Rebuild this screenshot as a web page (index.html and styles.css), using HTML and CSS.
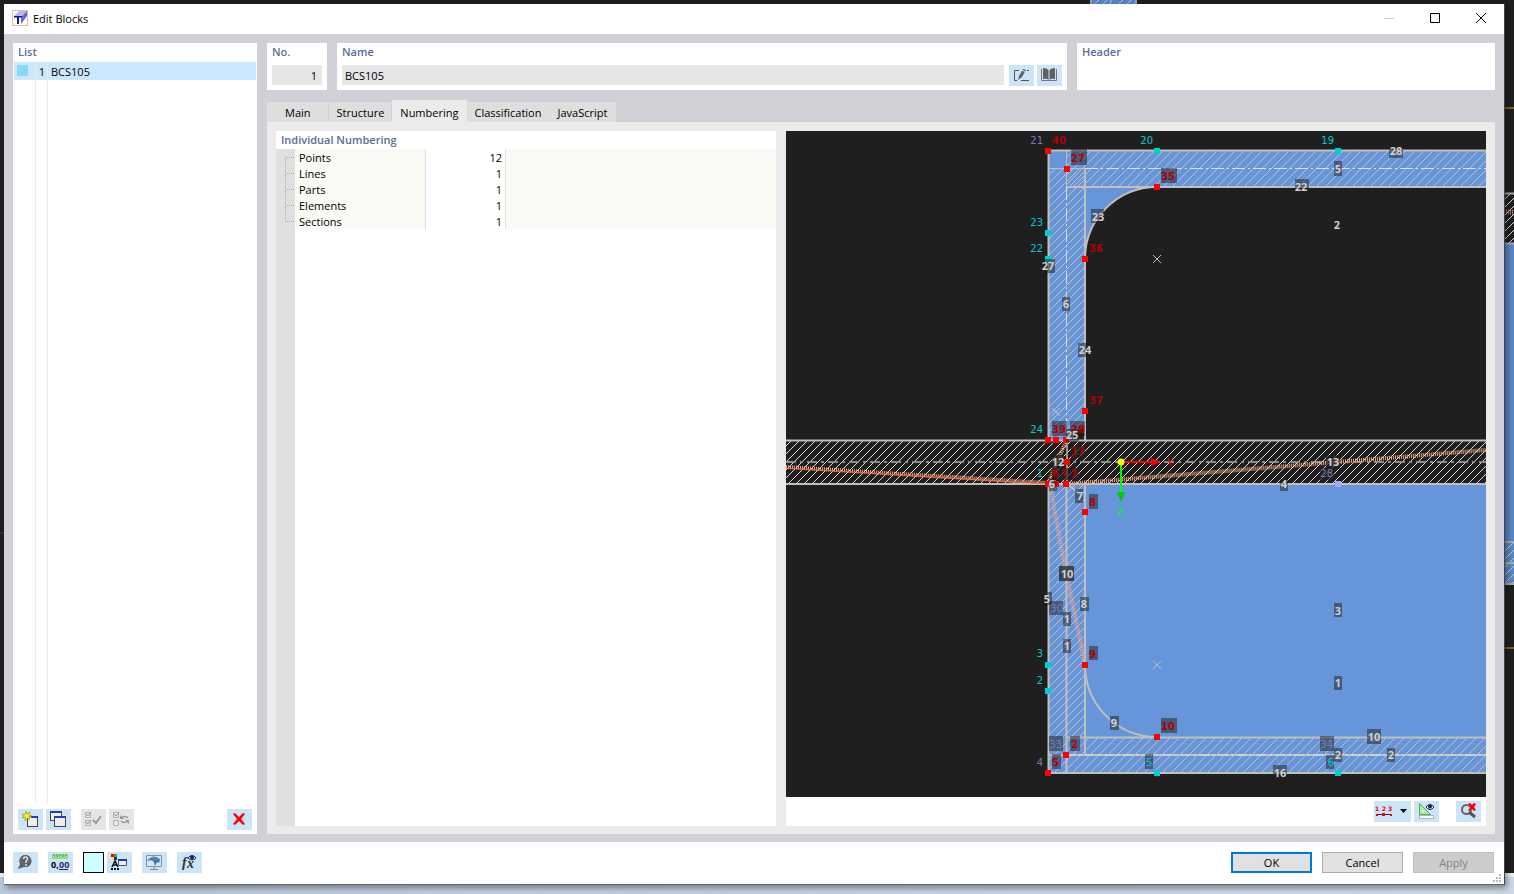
FILE: index.html
```html
<!DOCTYPE html>
<html lang="en">
<head>
<meta charset="utf-8">
<title>Edit Blocks</title>
<link rel="stylesheet" href="styles.css">
</head>
<body>
<svg class="desktop" viewBox="0 0 1514 894" preserveAspectRatio="none" aria-hidden="true">
  <defs>
    <pattern id="hatch" width="8" height="8" patternUnits="userSpaceOnUse"><path d="M-1 1L1 -1M0 8L8 0M7 9L9 7" stroke="#bfbfbf" stroke-width="1" fill="none" shape-rendering="crispEdges"/></pattern>
    <pattern id="hatchWide" width="9" height="9" patternUnits="userSpaceOnUse"><path d="M-1 1L1 -1M0 9L9 0M8 10L10 8" stroke="#bfbfbf" stroke-width="1" fill="none" shape-rendering="crispEdges"/></pattern>
    <pattern id="hatchWhite" width="8" height="8" patternUnits="userSpaceOnUse"><path d="M-1 1L1 -1M0 8L8 0M7 9L9 7" stroke="#dcdcdc" stroke-width="1" fill="none" shape-rendering="crispEdges"/></pattern>
    <linearGradient id="sky"><stop offset="0" stop-color="#b9c8dc"/><stop offset="1" stop-color="#ccd8e5"/></linearGradient>
  </defs>
  <rect width="1514" height="894" fill="#1f1f1f"/>
  <rect x="1090" width="47" height="5" fill="#5583c8"/><path d="M1091 0v5M1136 0v5M1111 0l-1 5M1095 4l4-4M1103 4l4-4M1119 4l4-4M1127 4l4-4" stroke="#bfbfbf"/>
  <path d="M1500 108h14M1500 648h14" stroke="#82660f" stroke-width="2"/>
  <rect x="1500" y="193" width="14" height="51" fill="url(#hatchWhite)"/>
  <rect x="1500" y="244" width="14" height="340" fill="#5b86c5"/>
  <rect x="1500" y="542" width="14" height="42" fill="url(#hatch)"/>
  <path d="M1500 193.500h14M1500 243.500h14M1500 542h14M1500 563h14M1500 584h14" stroke="#aaa" stroke-width="2"/>
  <path d="M1504 212h10" stroke="#b57a61" stroke-width="5" stroke-dasharray="1 1"/>
  <path d="M0 533h4" stroke="#444"/>
  <rect y="873" width="1514" height="4" fill="#eee"/>
  <rect y="877" width="1514" height="17" fill="url(#sky)"/>
</svg>

<main class="window">
  <header class="titlebar">
    <svg class="app-icon" viewBox="0 0 16 16" aria-hidden="true"><rect x=".5" y=".5" width="15" height="15" fill="#fff" stroke="#e8bf93"/><path d="M2 6l5-5h8l-5 5z" fill="#b6b6f6"/><path d="M10 6l5-5v5l-6 8V7z" fill="#6464d8"/><path d="M2 6h8v1.500H7V14H5V7.500H2z" fill="#17178c"/></svg>
    <h1>Edit Blocks</h1>
    <div class="caption">
      <button aria-label="Minimize" disabled><svg viewBox="0 0 10 10"><path d="M0 5.500h10" stroke="#c8c8c8"/></svg></button>
      <button aria-label="Maximize"><svg viewBox="0 0 10 10"><path d="M.5.500h9v9h-9z" stroke="#000" fill="none"/></svg></button>
      <button aria-label="Close"><svg viewBox="0 0 10 10"><path d="M0 0l10 10M10 0L0 10" stroke="#000" fill="none"/></svg></button>
    </div>
  </header>

  <div class="content">
    <section class="panel list">
      <h2>List</h2>
      <ul>
        <li class="selected"><span class="swatch"></span><span class="num">1</span><span class="label">BCS105</span></li>
        <li class="rest"><span></span><span></span><span></span></li>
      </ul>
      <div class="tools">
        <button class="tool" aria-label="New"><svg viewBox="0 0 25 21"><rect x="9.500" y="7.500" width="10" height="10" fill="#eee" stroke="#444"/><path d="M13 7h7v2h-7z" fill="#2638c8"/><path d="M8 2l1 3 3-2-1 3 3 1-3 1 1 3-3-2-2 3V8L4 9l2-2-2-2 3 .500z" fill="#ffef00" stroke="#8b8b20" stroke-width=".6"/></svg></button>
        <button class="tool" aria-label="Copy"><svg viewBox="0 0 25 21"><rect x="4.500" y="2.500" width="11" height="9" fill="#eee" stroke="#444"/><path d="M5 2h10v2H5z" fill="#2638c8"/><rect x="8.500" y="7.500" width="11" height="10" fill="#eee" stroke="#444"/><path d="M9 7h10v2H9z" fill="#2638c8"/></svg></button>
        <button class="tool off gap" aria-label="Select all" disabled><svg viewBox="0 0 25 21"><g fill="none" stroke="#999"><path d="M4.500 3.500h5v5h-5zM4.500 11.500h5v5h-5z" stroke="#b4b4b4"/><path d="M5 5l2 2 3-4M5 13l2 2 3-4"/><path d="M12 11l3 3 5-7" stroke-width="2"/></g></svg></button>
        <button class="tool off" aria-label="Invert selection" disabled><svg viewBox="0 0 25 21"><g fill="none" stroke="#999"><path d="M4.500 3.500h5v5h-5zM4.500 11.500h5v5h-5z" stroke="#b4b4b4"/><path d="M5 5l2 2 3-4"/><path d="M12 9q4-3 7 0M19 12q-4 3-7 0" stroke-width="1.500"/></g><path d="M11 6v4h4zM20 15v-4h-4z" fill="#999"/></svg></button>
        <button class="tool end" aria-label="Delete"><svg viewBox="0 0 25 21"><path d="M6 5l2-1 4 4 4-4 2 1-4 5 4 5-2 1-4-4-4 4-2-1 4-5z" fill="#f00"/></svg></button>
      </div>
    </section>

    <div class="details">
      <div class="fields">
        <section class="panel no"><label for="no">No.</label><input id="no" value="1" readonly></section>
        <section class="panel name"><label for="name">Name</label>
          <div class="name-row"><input id="name" value="BCS105" readonly>
            <button class="tool" aria-label="Edit name"><svg viewBox="0 0 25 21"><path d="M10 5.500H5.500v10H8M12 15.500h8M18 5.500h2" fill="none" stroke="#555"/><path d="M9 15l1-4 4-7 3 1-4 7z" fill="#606060"/><path d="M13 5l3 2" stroke="#cce4f7"/></svg></button>
            <button class="tool" aria-label="Library"><svg viewBox="0 0 25 21"><path d="M4.500 4v11.500h15V4" fill="none" stroke="#777"/><path d="M6 3q4 0 5.500 2v10Q10 13 6 14zM18 3q-4 0-5.500 2v10Q14 13 18 14z" fill="#606060"/></svg></button>
          </div>
        </section>
        <section class="panel header"><h2>Header</h2></section>
      </div>

      <nav class="tabs" role="tablist">
        <button role="tab">Main</button>
        <button role="tab">Structure</button>
        <button role="tab" class="active" aria-selected="true">Numbering</button>
        <button role="tab">Classification</button>
        <button role="tab">JavaScript</button>
      </nav>

      <div class="tabpanel" role="tabpanel">
        <section class="panel numbering">
          <h2>Individual Numbering</h2>
          <table>
            <tr><td class="tree"></td><th scope="row">Points</th><td class="value">12</td><td class="blank"></td></tr>
            <tr><td class="tree"></td><th scope="row">Lines</th><td class="value">1</td><td class="blank"></td></tr>
            <tr><td class="tree"></td><th scope="row">Parts</th><td class="value">1</td><td class="blank"></td></tr>
            <tr><td class="tree"></td><th scope="row">Elements</th><td class="value">1</td><td class="blank"></td></tr>
            <tr><td class="tree"></td><th scope="row">Sections</th><td class="value">1</td><td class="blank"></td></tr>
          </table>
          <div class="gutter"></div>
        </section>

        <section class="panel preview">
          <div class="viewport">
          <svg viewBox="786 131 700 666" preserveAspectRatio="xMidYMid slice" role="img" aria-label="Section preview">
            <!-- upper section -->
            <path d="M1048 150H1486V187H1157A72 72 0 0 0 1085 259V440H1048z" fill="#6695da"/>
            <rect x="1066" y="151" width="420" height="36" fill="url(#hatchWide)"/>
            <rect x="1049" y="169" width="36" height="271" fill="url(#hatch)"/>
            <!-- lower section -->
            <rect x="1048" y="484" width="438" height="289" fill="#6695da"/>
            <rect x="1049" y="484" width="36" height="253" fill="url(#hatch)"/>
            <rect x="1049" y="737" width="437" height="36" fill="url(#hatchWide)"/>
            <!-- plate -->
            <rect x="786" y="440" width="700" height="44" fill="#1f1f1f"/>
            <rect x="786" y="440" width="700" height="44" fill="url(#hatchWhite)"/>
            <path d="M1070 440l15-15v15z" fill="#1f1f1f"/>
            <g fill="none" stroke="#bfbfbf" stroke-width="2">
              <path d="M1048 150.500H1486M1048.500 150V440M1085 168V440M1066 187H1486M1085 259A72 72 0 0 1 1157 187"/>
              <path d="M1049 168.500h36M1066.500 150v37" stroke-width="1"/>
              <path d="M786 440.500H1486M786 484H1486M1048.500 484V773M1066.500 484V773M1085 484V755M1066 737.500H1486M1048 773H1486M1085 665A72 72 0 0 0 1157 737M1049 755H1486M1067 484l13 10"/>
              <path d="M1067 440v44" stroke="#999"/>
            </g>
            <path d="M1085 168.500H1486M1066.500 187V440" stroke="#ddd" stroke-dasharray="13 3 2 3"/>
            <path d="M786 462H1486" stroke="#8b8b8b" stroke-width="2" stroke-dasharray="10 4 3 4"/>
            <path d="M1066 755H1486" stroke="#ddd" stroke-dasharray="10 3 3 3"/>
            <g fill="none" stroke="#f3a580" stroke-width="4" stroke-dasharray="1 1">
              <path d="M786 467L1048 483M1066 484L1486 450M1066 441L1048 484"/>
              <path d="M1050 484L1062 552 1085 665" stroke="#e0a59b"/>
            </g>
            <path d="M786 468L1048 484" stroke="#ff693e"/>
            <g stroke="#bfbfbf" fill="none"><path d="M1153 255l8 8m0-8l-8 8M1153 661l8 8m0-8l-8 8M1052 408l8 8m0-8l-8 8"/></g>

            <g class="points" fill="#f00">
              <path d="M1045 148h6v6h-6zM1064 166h6v6h-6zM1154 184h6v6h-6zM1082 256h6v6h-6zM1082 408h6v6h-6zM1045 437h6v6h-6zM1053 437h6v6h-6zM1063 437h6v6h-6zM1064 459h6v6h-6zM1045 481h6v6h-6zM1053 481h6v6h-6zM1063 481h6v6h-6zM1082 509h6v6h-6zM1082 662h6v6h-6zM1154 734h6v6h-6zM1063 752h6v6h-6zM1045 770h6v6h-6z"/>
              <path d="M1154 148h6v6h-6zM1335 148h6v6h-6zM1045 230h6v6h-6zM1045 256h6v6h-6zM1045 662h6v6h-6zM1045 688h6v6h-6zM1154 770h6v6h-6zM1335 770h6v6h-6z" fill="#00cfcf"/>
              <path d="M1335 481h6v6h-6z" fill="#aaa4ff"/>
            </g>

            <g class="plates">
              <rect x="1071" y="149" width="16" height="16"/><rect x="1161" y="168" width="16" height="15"/>
              <rect x="1091" y="209" width="13" height="14"/><rect x="1042" y="259" width="13" height="14"/><rect x="1062" y="297" width="8" height="14"/>
              <rect x="1078" y="343" width="13" height="14"/><rect x="1389" y="145" width="14" height="13"/><rect x="1334" y="161" width="8" height="15"/><rect x="1295" y="179" width="14" height="14"/>
              <rect x="1052" y="421" width="15" height="15"/><rect x="1070" y="421" width="15" height="15"/><rect x="1066" y="429" width="13" height="13"/>
              <rect x="1052" y="455" width="12" height="14" class="strong"/><rect x="1071" y="446" width="14" height="12" class="strong"/><rect x="1052" y="468" width="26" height="12" class="strong"/><rect x="1049" y="478" width="8" height="13"/>
              <rect x="1075" y="489" width="8" height="14"/><rect x="1089" y="494" width="9" height="15"/><rect x="1280" y="479" width="8" height="12"/><rect x="1326" y="455" width="14" height="14" class="strong"/><rect x="1320" y="468" width="14" height="12" class="strong"/>
              <rect x="1059" y="566" width="15" height="15" class="strong"/><rect x="1044" y="592" width="8" height="13"/><rect x="1049" y="601" width="14" height="14"/><rect x="1080" y="597" width="9" height="14"/><rect x="1063" y="612" width="8" height="14"/><rect x="1063" y="639" width="8" height="14"/>
              <rect x="1089" y="646" width="9" height="14"/><rect x="1110" y="716" width="9" height="14"/><rect x="1161" y="718" width="16" height="15"/>
              <rect x="1049" y="736" width="14" height="15"/><rect x="1070" y="736" width="10" height="15"/><rect x="1052" y="754" width="9" height="15"/><rect x="1145" y="754" width="8" height="15"/>
              <rect x="1334" y="603" width="8" height="14"/><rect x="1334" y="676" width="8" height="14"/><rect x="1320" y="736" width="14" height="15"/><rect x="1326" y="755" width="8" height="14"/><rect x="1334" y="748" width="8" height="14"/><rect x="1367" y="729" width="14" height="15"/><rect x="1387" y="748" width="8" height="14"/><rect x="1273" y="765" width="14" height="12"/>
            </g>

            <g class="t-red">
              <text x="1052" y="144">40</text><text x="1071" y="162">27</text><text x="1161" y="180">35</text><text x="1089" y="252">36</text><text x="1089" y="404">37</text>
              <text x="1052" y="433">39</text><text x="1071" y="433">28</text><text x="1071" y="455">17</text><text x="1052" y="477">6</text><text x="1061" y="477">7</text><text x="1071" y="477">1</text>
              <text x="1089" y="506">8</text><text x="1089" y="658">9</text><text x="1161" y="730">10</text><text x="1071" y="748">2</text><text x="1052" y="766">5</text>
            </g>
            <g class="t-cyan">
              <text x="1153" y="144">20</text><text x="1334" y="144">19</text><text x="1043" y="226">23</text><text x="1043" y="252">22</text><text x="1043" y="433">24</text><text x="1043" y="477">1</text><text x="1043" y="657">3</text><text x="1043" y="684">2</text><text x="1152" y="766">5</text><text x="1334" y="766">6</text>
            </g>
            <g class="t-violet">
              <text x="1043" y="144">21</text><text x="1333" y="477">28</text><text x="1063" y="612">30</text><text x="1062" y="748">33</text><text x="1333" y="748">34</text><text x="1043" y="766">4</text>
            </g>
            <g class="t-grey">
              <text x="1396" y="155">28</text><text x="1338" y="173">5</text><text x="1301" y="191">22</text><text x="1337" y="229">2</text><text x="1098" y="221">23</text><text x="1048" y="270">27</text><text x="1066" y="308">6</text><text x="1085" y="354">24</text>
              <text x="1072" y="439">25</text><text x="1058" y="466">12</text><text x="1052" y="488">6</text><text x="1080" y="500">7</text><text x="1284" y="488">4</text><text x="1333" y="466">13</text>
              <text x="1067" y="578">10</text><text x="1047" y="603">5</text><text x="1084" y="608">8</text><text x="1067" y="623">1</text><text x="1067" y="650">1</text><text x="1114" y="727">9</text>
              <text x="1338" y="615">3</text><text x="1338" y="687">1</text><text x="1338" y="759">2</text><text x="1374" y="741">10</text><text x="1391" y="759">2</text><text x="1280" y="777">16</text>
            </g>
            <g class="axes">
              <path d="M1121 462h35" stroke="#f00" stroke-width="2"/><path d="M1151 458l10 4-10 4z" fill="#f00"/>
              <path d="M1121 462v32" stroke="#0f0" stroke-width="2"/><path d="M1117 492h8l-4 10z" fill="#00c800"/><circle cx="1121" cy="462" r="3.500" fill="#ff0"/>
              <text x="1170" y="466" fill="#f00">Y</text><text x="1121" y="515" fill="#0f0">Z</text>
            </g>
          </svg>
          </div>
          <div class="preview-tools">
            <button class="tool wide" aria-label="Numbering options"><svg viewBox="0 0 37 21"><g class="mini"><text x="3" y="10">1</text><text x="10" y="10">2</text><text x="16" y="10">3</text></g><path d="M3 13.500h14" stroke="#222c77"/><path d="M2 13h2v2H2zM8 12h3v3H8zM16 13h2v2h-2z" fill="#f00"/><path d="M26 8h7l-3.500 4z"/></svg></button>
            <button class="tool" aria-label="Show dimensions"><svg viewBox="0 0 25 21"><path d="M5.500 2.500v11h11z" fill="#a6efa0" stroke="#5aa85a"/><path d="M8 8v3h3z" fill="#e9fce8"/><path d="M5.500 14.500h14v3h-14z" fill="#fff" stroke="#777" stroke-dasharray="1 1"/><path d="M12 6q4-5 8 0-4 5-8 0z" fill="#fff" stroke="#17205a"/><circle cx="16" cy="5.500" r="2" fill="#17205a"/></svg></button>
            <button class="tool last" aria-label="Reset zoom"><svg viewBox="0 0 25 21"><circle cx="10.500" cy="8.500" r="4.500" fill="none" stroke="#666" stroke-width="2"/><path d="M13 11l6 5" stroke="#555" stroke-width="3"/><path d="M12 3l2-1 2 2 2-2 2 1-2 3 2 3-2 1-2-2-3 2-1-1 3-3z" fill="#f00"/></svg></button>
          </div>
        </section>
      </div>
    </div>
  </div>

  <footer>
    <div class="foot-tools">
      <button class="tool" aria-label="Help"><svg viewBox="0 0 25 21"><path d="M5 17l2-5A6 6 0 1 1 11 15z" fill="#636363"/><circle cx="12.500" cy="9" r="6" fill="#636363"/><path d="M10.500 7q0-2 2-2t2 2q0 1-1.500 2v2M13 12v2" stroke="#cce4f7" stroke-width="1.500" fill="none"/></svg></button>
      <button class="tool sp" aria-label="Units"><svg viewBox="0 0 25 21"><path d="M4 2h16v5H4z" fill="#8fdc86"/><path d="M6 2v2M9 2v3M12 2v2M15 2v3M18 2v2" stroke="#55a34f"/><text x="3" y="16" class="unit">0,</text><text x="11" y="16" class="unit blue">00</text><path d="M11 17.500h9" stroke="#1e2c73"/></svg></button>
      <button class="color sp" aria-label="Color"></button>
      <button class="tool" aria-label="Display colors"><svg viewBox="0 0 25 21"><path d="M4 2h3v3H4z" fill="#f00"/><path d="M7 2h3v3H7z" fill="#4a4"/><path d="M4 5h3v3H4z" fill="#ef0"/><path d="M7 5h3v3H7z" fill="#22d"/><path d="M5 15l3-6 3 6M6 13h4" stroke="#111" stroke-width="1.500" fill="none"/><path d="M4 17h8" stroke="#111" stroke-width="2" stroke-dasharray="2 1"/><path d="M11.500 7.500h8v6h-8z" fill="#eee" stroke="#555"/><path d="M11 7h9v2h-9z" fill="#2638a8"/></svg></button>
      <button class="tool sp" aria-label="Display"><svg viewBox="0 0 25 21"><path d="M4.500 3.500h15v11h-15z" fill="#d3e8f6" stroke="#83929c"/><path d="M5 9q6-8 13-2l-1 4-2-1-2 4-1-4-3-2z" fill="#376f99"/><path d="M7 8q5-5 10-1M9 9q3-3 7-1" stroke="#8fb6d2" fill="none" stroke-width=".6"/><path d="M12 15v2M8 17.500h8" stroke="#808c95"/></svg></button>
      <button class="tool sp" aria-label="Function"><svg viewBox="0 0 25 21"><text x="5" y="15" class="fx">f</text><text x="10" y="16" class="fx">x</text><path d="M11 6q4-5 8 0-4 4-8 0z" fill="#fff" stroke="#17205a"/><circle cx="15" cy="5.500" r="2" fill="#17205a"/></svg></button>
    </div>
    <div class="actions">
      <button class="push primary">OK</button>
      <button class="push">Cancel</button>
      <button class="push" disabled>Apply</button>
    </div>
    <svg class="grip" viewBox="0 0 9 9" aria-hidden="true"><path d="M6 0h2v2H6zM3 3h2v2H3zM6 3h2v2H6zM0 6h2v2H0zM3 6h2v2H3zM6 6h2v2H6z" fill="#bbb"/></svg>
  </footer>
</main>
</body>
</html>
```
FILE: styles.css
```css
* { box-sizing: border-box; }

body {
  margin: 0;
  height: 100vh;
  display: flex;
  overflow: hidden;
  background: #1f1f1f;
  color: #000;
  font: 11px/16px "Open Sans", "Noto Sans", sans-serif;
}

button, input { font: inherit; color: inherit; border: 0; padding: 0; margin: 0; border-radius: 0; }
h1, h2 { margin: 0; font-size: 11px; line-height: 16px; }
svg { display: block; }

.desktop { position: absolute; inset: 0; width: 100%; height: 100%; z-index: -1; }

.window {
  flex: 1;
  min-width: 0;
  margin: 4px 9px 9px 4px;
  display: flex;
  flex-direction: column;
  background: #d1d0d6;
  border-right: 1px solid #3c4650;
  border-bottom: 1px solid #666;
  box-shadow: 2px 3px 6px rgba(0, 0, 0, .4);
}

.titlebar { height: 30px; flex: none; display: flex; align-items: center; background: #fff; padding: 0 0 2px 8px; }
.titlebar h1 { flex: 1; font-weight: 400; padding: 1px 0 0 5px; }
.app-icon { width: 16px; height: 16px; }
.caption { display: flex; height: 100%; }
.caption button { width: 46px; background: none; display: flex; align-items: center; justify-content: center; }
.caption svg { width: 10px; height: 10px; }

.content { flex: 1; min-height: 0; display: flex; gap: 10px; padding: 9px 9px 8px; }
.panel { background: #fff; }
.panel h2, .panel label { color: #5b6d98; font-weight: 600; padding-left: 5px; }

.list { width: 244px; flex: none; display: flex; flex-direction: column; }
.list h2 { padding-top: 1px; height: 19px; }
.list ul { list-style: none; margin: 0; padding: 0 1px; flex: 1; display: flex; flex-direction: column; }
.list li { display: grid; grid-template-columns: 22px 12px 1fr; height: 18px; line-height: 19px; }
.list li.rest { flex: 1; }
.list li span:nth-child(-n+2) { border-right: 1px solid #ebebeb; }
.list .selected { background: #cce8ff; }
.list .swatch { background: linear-gradient(#8ed7f4, #8ed7f4) 3px 3px / 11px 11px no-repeat; }
.list .num { text-align: right; padding-right: 2px; }
.list .label { padding-left: 3px; }
.tools { display: flex; gap: 3px; padding: 6px 5px 4px; }

.tool { width: 25px; height: 21px; flex: none; background: #cce4f7; }
.tool svg { width: 100%; height: 100%; }
.tool.off { background: #e5e5e5; }
.tool.gap { margin-left: 7px; }
.tool.end { margin-left: auto; }
.tool.wide { width: 37px; }

.details { flex: 1; min-width: 0; display: flex; flex-direction: column; }
.fields { display: flex; gap: 10px; height: 47px; flex: none; }
.no { width: 60px; }
.name { flex: 730 1 0; }
.header { flex: 418 1 0; }
.fields label { display: block; padding-top: 1px; height: 22px; }
.fields h2 { padding-top: 1px; }
.fields input { height: 20px; background: #e6e6e6; }
.no input { display: block; width: 50px; margin-left: 5px; padding-right: 5px; text-align: right; }
.name-row { display: flex; gap: 3px; padding: 0 5px; }
.name-row input { flex: 1; min-width: 0; padding-left: 3px; margin-right: 2px; }

.tabs { display: flex; align-items: flex-end; height: 32px; flex: none; }
.tabs button { height: 20px; padding: 1px 7px 0 8px; background: #dedede; border-right: 1px solid #d1d0d6; }
.tabs button:first-child { padding: 1px 17px 0 18px; }
.tabs button.active { height: 22px; padding: 3px 9px 0 8px; background: #ebebeb; border: 0; }
.tabs button.active ~ button { border: 0; padding: 1px 9px 0 7px; }

.tabpanel { flex: 1; min-height: 0; display: flex; gap: 10px; padding: 9px 9px 8px; background: #ebebeb; }
.numbering { flex: 500 1 0; min-width: 0; display: flex; flex-direction: column; }
.numbering h2 { height: 18px; padding-top: 1px; }
table { border-spacing: 0; width: 100%; table-layout: fixed; }
td, th { height: 16px; padding: 1px 0 0; line-height: 15px; font-weight: 400; text-align: left; }
th { width: 131px; padding-left: 4px; background: #f9faf4; border-right: 1px solid #ddd; }
.tree {
  width: 19px;
  background:
    repeating-linear-gradient(90deg, #aaa 0 1px, transparent 1px 2px) 9px 8px / 10px 1px no-repeat,
    repeating-linear-gradient(#aaa 0 1px, transparent 1px 2px) 9px 0 / 1px 16px no-repeat,
    #e0e0e0;
}
tr:first-child .tree { background-size: 10px 1px, 1px 8px, auto; background-position: 9px 8px, 9px 8px, 0 0; }
tr:last-child .tree { background-size: 10px 1px, 1px 8px, auto; }
.value { width: 80px; padding-right: 3px; text-align: right; border-right: 1px solid #ddd; }
.blank { background: #f9faf4; }
.gutter { flex: 1; width: 19px; background: #e0e0e0; }

.preview { flex: 700 1 0; min-width: 0; display: flex; flex-direction: column; }
.viewport { flex: 1; min-height: 0; background: #1f1f1f; }
.viewport svg { width: 100%; height: 100%; }
.preview-tools { height: 29px; flex: none; display: flex; gap: 3px; justify-content: flex-end; padding: 4px 5px; }
.preview-tools .last { margin-left: 14px; }

.plates rect { fill: #1f1f1f; fill-opacity: .5; }
.plates .strong { fill-opacity: .7; }
.t-red { font: bold 10px "DejaVu Sans", sans-serif; fill: #b00000; }
.t-cyan, .t-violet { font: 10px "DejaVu Sans", sans-serif; fill: #00cccc; text-anchor: end; }
.t-violet { fill: #7b78b8; }
.t-grey { font: bold 11px "Open Sans", sans-serif; fill: #d0d0d0; text-anchor: middle; }
.axes text { font: 11px "Open Sans", sans-serif; text-anchor: middle; }
.mini { font: bold 6px "DejaVu Sans", sans-serif; fill: #e00; text-anchor: middle; }
.unit { font: bold 9px "Open Sans", sans-serif; }
.unit.blue { fill: #1e2c73; }
.fx { font: italic bold 14px "Liberation Serif", serif; fill: #333; }

footer { position: relative; height: 42px; flex: none; display: flex; justify-content: space-between; align-items: center; background: #fff; padding: 0 10px 1px 9px; }
.foot-tools { display: flex; gap: 3px; }
.foot-tools .sp { margin-left: 7px; }
.color { width: 21px; height: 21px; background: #ccffff; border: 1px solid #000; }
.actions { display: flex; gap: 10px; }
.push { width: 81px; height: 21px; background: #e1e1e1; border: 1px solid #adadad; }
.push.primary { border: 2px solid #0078d7; }
.push:disabled { background: #ccc; border-color: #bfbfbf; color: #838383; }
.grip { position: absolute; right: 2px; bottom: 1px; width: 9px; height: 9px; }
```
